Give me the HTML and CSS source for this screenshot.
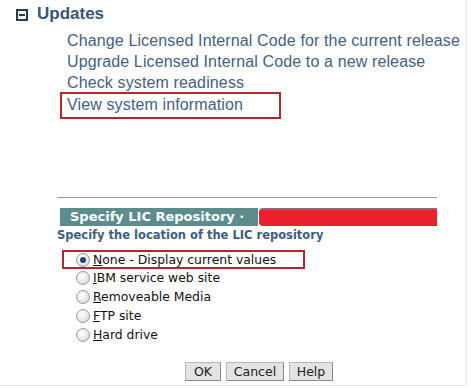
FILE: index.html
```html
<!DOCTYPE html>
<html>
<head>
<meta charset="utf-8">
<link rel="stylesheet" href="styles.css">
</head>
<body>
<div class="page">
  <div class="section-head">
    <svg class="toggle" width="12" height="12" viewBox="0 0 12 12"><rect x="1" y="1" width="10" height="10" fill="#f2f4f6" stroke="#2c3a49" stroke-width="2"/><rect x="3" y="5" width="6" height="2" fill="#2c3a49"/></svg>
    <span class="section-title">Updates</span>
  </div>
  <ul class="links">
    <li>Change Licensed Internal Code for the current release</li>
    <li>Upgrade Licensed Internal Code to a new release</li>
    <li>Check system readiness</li>
    <li class="boxed">View system information</li>
  </ul>
  <div class="rule"></div>
  <div class="panel">
    <div class="titlebar"><span class="title">Specify LIC Repository ·</span><span class="redact"></span></div>
    <div class="subtitle">Specify the location of the LIC repository</div>
    <div class="options">
      <div class="opt boxed-opt"><span class="radio on"></span><span><u>N</u>one - Display current values</span></div>
      <div class="opt"><span class="radio"></span><span><u>I</u>BM service web site</span></div>
      <div class="opt"><span class="radio"></span><span><u>R</u>emoveable Media</span></div>
      <div class="opt"><span class="radio"></span><span><u>F</u>TP site</span></div>
      <div class="opt"><span class="radio"></span><span><u>H</u>ard drive</span></div>
    </div>
    <div class="buttons">
      <span class="btn ok">OK</span>
      <span class="btn cancel">Cancel</span>
      <span class="btn help">Help</span>
    </div>
  </div>
</div>
</body>
</html>
```
FILE: styles.css
```css
html, body { margin: 0; padding: 0; background: #fff; }
.page {
  width: 466px;
  height: 385px;
  border-right: 1px solid #ececec;
  border-bottom: 1px solid #e6e6e6;
  font-family: "Liberation Sans", Arial, sans-serif;
  overflow: hidden;
}
.section-head {
  display: flex;
  align-items: center;
  padding: 5px 0 0 16px;
  height: 18px;
}
.toggle { display: block; margin-top: 1px; }
.section-title {
  margin-left: 9px;
  font-size: 17px;
  font-weight: bold;
  color: #3a5676;
  line-height: 18px;
}
.links {
  list-style: none;
  margin: 7px 0 0 0;
  padding: 0 0 0 67px;
  font-size: 16px;
  letter-spacing: 0.13px;
  line-height: 21px;
  color: #435f82;
}
.links li { white-space: nowrap; }
.links li.boxed {
  margin: -1px 0 0 -7px;
  padding: 0 0 2px 5px;
  width: 221px;
  box-sizing: border-box;
  border: 2px solid #b3262c;
}
.rule {
  margin: 78px 0 0 57px;
  width: 380px;
  height: 1px;
  background: #9a9a9a;
}
.panel {
  font-family: "DejaVu Sans", Verdana, sans-serif;
}
.titlebar {
  display: flex;
  margin: 10px 0 0 60px;
  height: 18px;
  width: 377px;
}
.title {
  background: #5c8c8c;
  color: #fff;
  font-weight: bold;
  font-size: 13px;
  line-height: 18px;
  padding-left: 10px;
  width: 188px;
  white-space: nowrap;
  overflow: hidden;
}
.redact {
  flex: 1;
  background: #e9222c;
  border-top: 2px solid #8c6e6e;
  border-radius: 4px 0 0 4px;
  margin-left: 1px;
}
.subtitle {
  margin: 2px 0 0 57px;
  font-size: 11.5px;
  font-weight: bold;
  color: #3f5d7d;
  line-height: 14px;
  white-space: nowrap;
}
.options {
  margin: 8px 0 0 62px;
}
.opt {
  display: flex;
  align-items: center;
  height: 19px;
  font-size: 12.4px;
  color: #111;
  padding-left: 14px;
  white-space: nowrap;
}
.opt u { text-decoration: underline; }
.boxed-opt {
  width: 243px;
  box-sizing: border-box;
  border: 2px solid #b3262c;
  margin-bottom: -1px;
  padding-left: 12px;
}
.radio {
  width: 12px;
  height: 12px;
  border-radius: 50%;
  border: 1px solid #9a9a9a;
  background: radial-gradient(circle at 40% 35%, #ffffff 0%, #e8e8e8 55%, #c4c4c4 100%);
  margin-right: 3px;
  flex: none;
  position: relative;
}
.radio.on::after {
  content: "";
  position: absolute;
  left: 3px;
  top: 3px;
  width: 6px;
  height: 6px;
  border-radius: 50%;
  background: #22456e;
}
.buttons {
  display: flex;
  gap: 5px;
  margin: 18px 0 0 185px;
}
.btn {
  display: block;
  box-sizing: border-box;
  height: 19px;
  line-height: 17px;
  text-align: center;
  font-size: 12.5px;
  color: #222;
  background: #e3e3e3;
  border: 1px solid #b8b8b8;
  border-right-color: #8a8a8a;
  border-bottom-color: #8a8a8a;
}
.ok { width: 36px; }
.cancel { width: 58px; }
.help { width: 44px; }
```
